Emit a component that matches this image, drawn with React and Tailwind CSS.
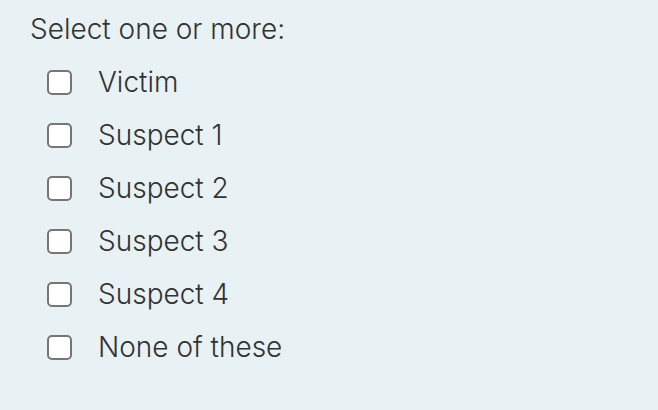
import React from "react";

const options = ["Victim", "Suspect 1", "Suspect 2", "Suspect 3", "Suspect 4", "None of these"];

export default function App() {
  return (
    <div
      className="w-[658px] h-[410px] bg-[#e8f2f4] pl-[30px] pt-[9px] text-[#333333]"
      style={{ fontFamily: 'Inter, "Liberation Sans", Arial, sans-serif' }}
    >
      <div className="text-[28px] leading-[40px] font-light">Select one or more:</div>
      <div className="mt-[7px] pl-[17px] flex flex-col">
        {options.map((label) => (
          <label key={label} className="flex items-center h-[53px] gap-[26px] cursor-pointer">
            <span className="w-[25px] h-[25px] shrink-0 rounded-[5px] border-2 border-[#767676] bg-white" />
            <span className="text-[28px] leading-[53px] font-light">{label}</span>
          </label>
        ))}
      </div>
    </div>
  );
}
